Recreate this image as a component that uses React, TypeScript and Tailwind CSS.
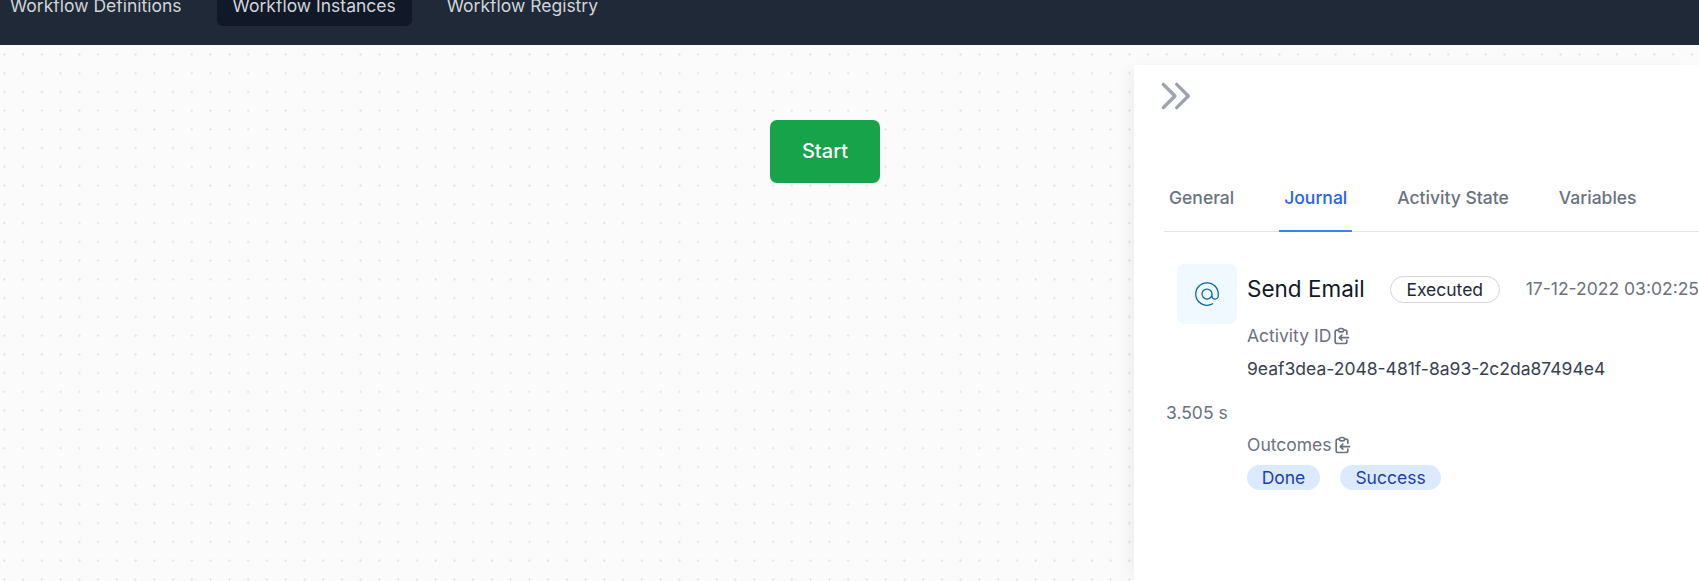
import React from 'react';

const tabs = ['General', 'Journal', 'Activity State', 'Variables'];

function CopyIcon() {
  return (
    <svg viewBox="0 0 24 24" fill="none" stroke="currentColor" strokeWidth={2} className="h-5 w-5 shrink-0">
      <path strokeLinecap="round" strokeLinejoin="round" d="M9 5H7a2 2 0 00-2 2v12a2 2 0 002 2h10a2 2 0 002-2v-2M9 5a2 2 0 002 2h2a2 2 0 002-2M9 5a2 2 0 012-2h2a2 2 0 012 2m0 0h2a2 2 0 012 2v3m2 4H10m0 0l3-3m-3 3l3 3" />
    </svg>
  );
}

export default function App() {
  return (
    <div className="flex h-[581px] w-full flex-col overflow-hidden font-['Inter',sans-serif] text-[17.5px] leading-[25px]">
      <header className="flex h-[45px] shrink-0 items-end overflow-hidden bg-[#1f2937] pb-[19px]">
        <nav className="-ml-1.5 flex items-end gap-[19px] text-[#d1d5db]">
          <a className="rounded-md px-4 pb-2 pt-3">Workflow Definitions</a>
          <a className="rounded-md bg-[#111827] px-4 pb-2 pt-3">Workflow Instances</a>
          <a className="rounded-md px-4 pb-2 pt-3">Workflow Registry</a>
        </nav>
      </header>

      <main className="relative flex min-h-0 flex-1 justify-end bg-[#fbfbfb] bg-[radial-gradient(#e6e6e6_1px,transparent_1.2px)] bg-[size:18.75px_18.75px] bg-[position:-5px_0px]">
        <button className="absolute left-[770px] top-[75px] flex h-[63px] w-[110px] items-center justify-center rounded-[7px] bg-[#16a34a] text-[20px] font-medium text-white">
          Start
        </button>

        <aside className="mt-5 w-[565px] shrink-0 overflow-hidden bg-white pl-[30px] shadow-[-8px_0_16px_-4px_rgba(0,0,0,0.06)]">
          <button className="mt-[11px] -ml-[9px] block text-[#9ca3af]">
            <svg viewBox="0 0 24 24" fill="none" stroke="currentColor" strokeWidth={2} strokeLinecap="round" strokeLinejoin="round" className="h-10 w-10">
              <path d="M13 5l7 7-7 7M5 5l7 7-7 7" />
            </svg>
          </button>

          <div className="mt-[69px] flex gap-10 border-b border-[#e5e7eb]">
            {tabs.map((tab) => (
              <div
                key={tab}
                className={`-mb-px border-b-2 px-[5px] pb-5 font-medium ${
                  tab === 'Journal' ? 'border-[#3b82f6] text-[#2563eb]' : 'border-transparent text-[#6b7280]'
                }`}
              >
                {tab}
              </div>
            ))}
          </div>

          <div className="mt-8 flex pl-[13px]">
            <div className="flex h-[60px] w-[60px] shrink-0 items-center justify-center rounded-lg bg-[#f0f9ff] text-[#0369a1]">
              <svg viewBox="0 0 24 24" fill="none" stroke="currentColor" strokeWidth={1} strokeLinecap="round" strokeLinejoin="round" className="h-[30px] w-[30px]">
                <path d="M16 12a4 4 0 10-8 0 4 4 0 008 0zm0 0v1.5a2.5 2.5 0 005 0V12a9 9 0 10-9 9m4.5-1.206a8.959 8.959 0 01-4.5 1.206" />
              </svg>
            </div>
            <div className="ml-2.5 min-w-0 flex-1">
              <div className="flex items-center whitespace-nowrap pt-[11px]">
                <span className="text-[22.5px] leading-[26px] text-[#111827]">Send Email</span>
                <span className="relative top-px ml-[25px] flex h-[27px] w-[111px] items-center justify-center rounded-full border border-[#d1d5db] text-[#1f2937]">
                  Executed
                </span>
                <span className="ml-[26px] text-[#6b7280]">17-12-2022 03:02:25</span>
              </div>
              <div className="mt-[21px] flex items-center text-[#6b7280]">
                Activity ID
                <CopyIcon />
              </div>
              <div className="mt-[8px] text-[#374151]">9eaf3dea-2048-481f-8a93-2c2da87494e4</div>
            </div>
          </div>

          <div className="mt-[19px] pl-[2px] text-[#6b7280]">3.505 s</div>

          <div className="mt-[7px] pl-[83px]">
            <div className="flex items-center text-[#6b7280]">
              Outcomes
              <CopyIcon />
            </div>
            <div className="mt-[8px] flex gap-5 text-[#1e40af]">
              <span className="flex h-[25px] w-[73px] items-center justify-center rounded-full bg-[#dbeafe]">Done</span>
              <span className="flex h-[25px] w-[101px] items-center justify-center rounded-full bg-[#dbeafe]">Success</span>
            </div>
          </div>
        </aside>
      </main>
    </div>
  );
}
